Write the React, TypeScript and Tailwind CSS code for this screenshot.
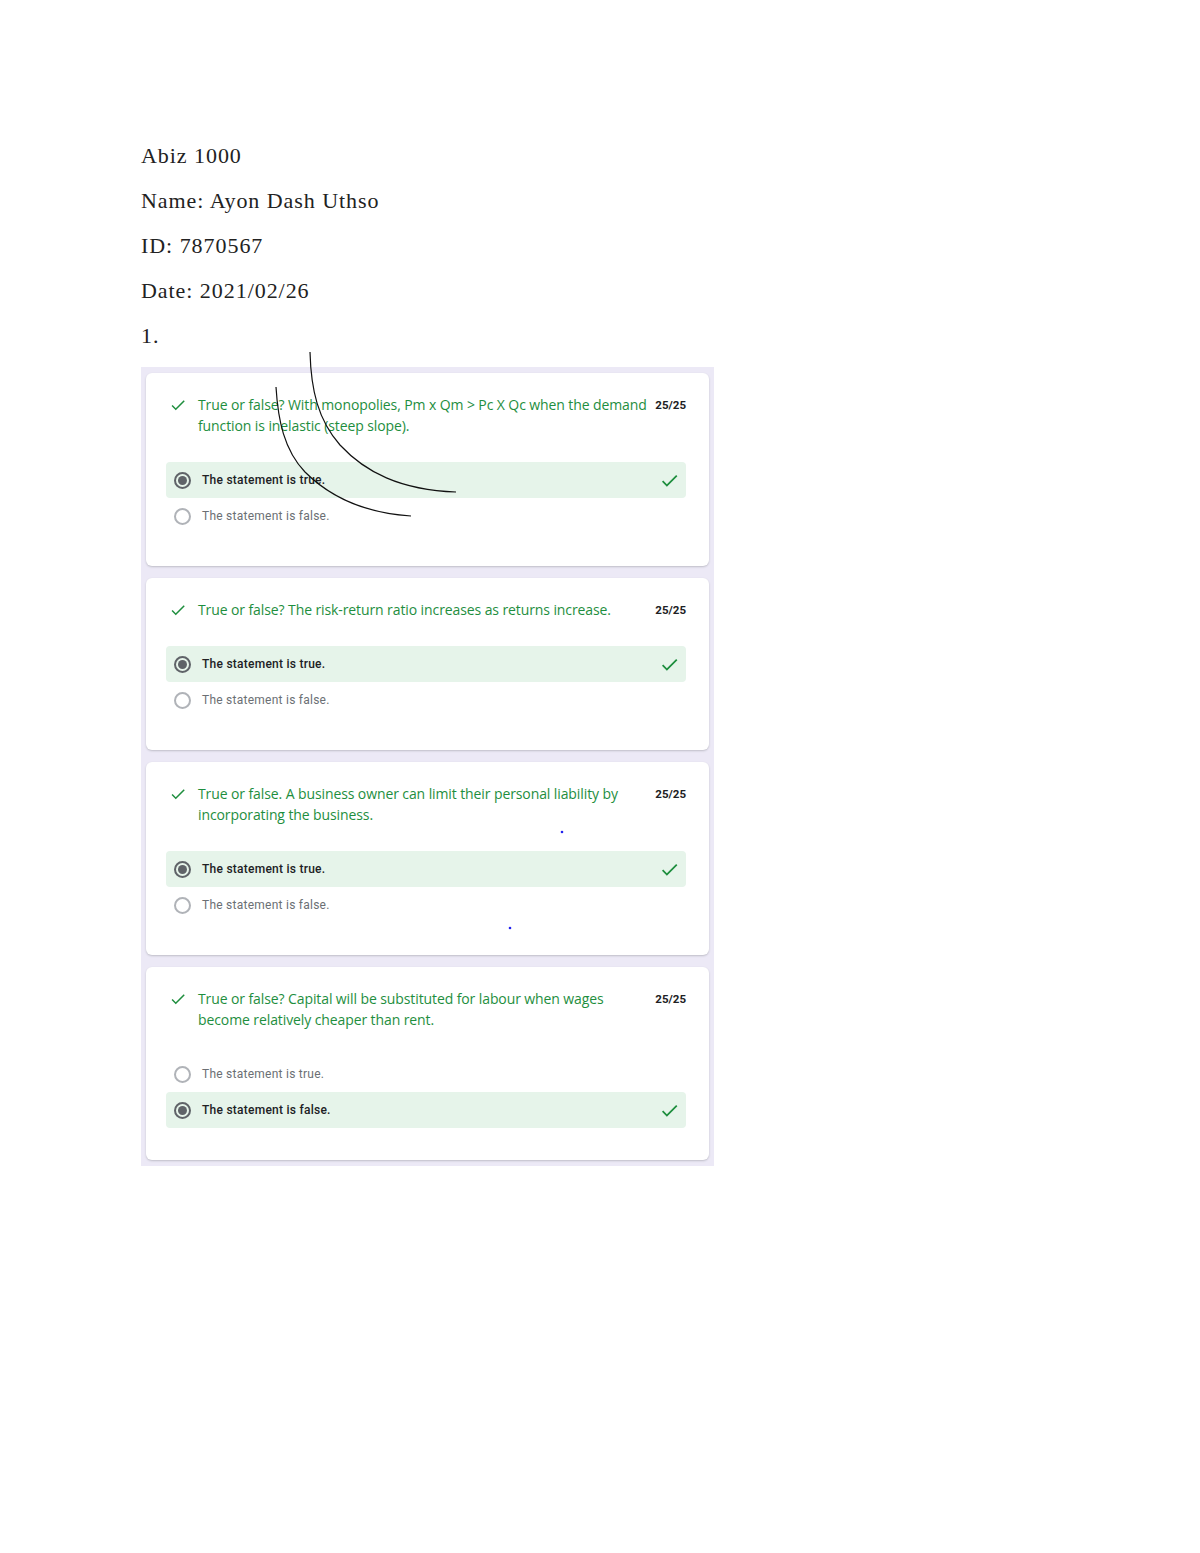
import React from "react";

const CheckIcon = ({ size = 18 }: { size?: number }) => (
  <svg width={size} height={size} viewBox="0 0 24 24" className="shrink-0">
    <path d="M9 16.17L4.83 12l-1.42 1.41L9 19 21 7l-1.41-1.41z" fill="#1e8e3e" />
  </svg>
);

const Radio = ({ selected }: { selected: boolean }) =>
  selected ? (
    <div className="w-[17px] h-[17px] rounded-full border-2 border-[#5f6368] flex items-center justify-center shrink-0">
      <div className="w-[9px] h-[9px] rounded-full bg-[#5f6368]" />
    </div>
  ) : (
    <div className="w-[17px] h-[17px] rounded-full border-2 border-[#b0b3b8] shrink-0" />
  );

type Q = { text: string; correct: "true" | "false" };

const questions: Q[] = [
  {
    text: "True or false? With monopolies, Pm x Qm > Pc X Qc when the demand function is inelastic (steep slope).",
    correct: "true",
  },
  { text: "True or false? The risk-return ratio increases as returns increase.", correct: "true" },
  {
    text: "True or false. A business owner can limit their personal liability by incorporating the business.",
    correct: "true",
  },
  {
    text: "True or false? Capital will be substituted for labour when wages become relatively cheaper than rent.",
    correct: "false",
  },
];

const Option = ({ label, selected }: { label: string; selected: boolean }) => (
  <div
    className={
      "h-[36px] flex items-center pl-[8px] pr-[8px] rounded-[4px] " + (selected ? "bg-[#e6f4ea]" : "")
    }
  >
    <Radio selected={selected} />
    <span
      className={
        "ml-[11px] text-[12px] tracking-[0.25px] " +
        (selected ? "text-[#202124] font-medium" : "text-[#6b6f74]")
      }
      style={{ fontFamily: "Roboto, 'Open Sans', sans-serif" }}
    >
      {label}
    </span>
    {selected && (
      <div className="ml-auto mr-[-2px]">
        <CheckIcon size={21} />
      </div>
    )}
  </div>
);

const Card = ({ q }: { q: Q }) => (
  <div className="bg-white rounded-[6px] shadow-[0_1px_2px_rgba(60,64,67,0.25)] pl-[20px] pr-[23px] pt-[21px] pb-[32px]">
    <div className="flex items-start">
      <div className="ml-[3px] mt-[2px]">
        <CheckIcon size={18} />
      </div>
      <div
        className="ml-[11px] w-[452px] text-[14px] leading-[21px] text-[#1e8e3e] tracking-[-0.1px]"
        style={{ fontFamily: "'Open Sans', Roboto, sans-serif" }}
      >
        {q.text}
      </div>
      <div
        className="ml-auto mt-[3px] text-[11.5px] font-bold text-[#202124]"
        style={{ fontFamily: "Roboto, sans-serif" }}
      >
        25/25
      </div>
    </div>
    <div className="mt-[26px] flex flex-col">
      <Option label="The statement is true." selected={q.correct === "true"} />
      <Option label="The statement is false." selected={q.correct === "false"} />
    </div>
  </div>
);

export default function App() {
  return (
    <div className="relative w-[1200px] h-[1553px] bg-white">
      <div
        className="pl-[141px] pt-[133px] text-[22px] leading-[45px] text-[#222] tracking-[0.95px]"
        style={{ fontFamily: "'Liberation Serif', 'Times New Roman', serif" }}
      >
        <div>Abiz 1000</div>
        <div>Name: Ayon Dash Uthso</div>
        <div>ID: 7870567</div>
        <div>Date: 2021/02/26</div>
        <div>1.</div>
      </div>
      <div className="ml-[141px] mt-[9px] w-[573px] bg-[#ece9f6] px-[5px] pt-[6px] pb-[6px] flex flex-col gap-[12px]">
        {questions.map((q, i) => (
          <Card key={i} q={q} />
        ))}
      </div>
      <svg
        className="absolute left-0 top-0 pointer-events-none"
        width={1200}
        height={1553}
        viewBox="0 0 1200 1553"
      >
        <path
          d="M310 352 C 311 390, 318 420, 340 445 C 365 472, 400 490, 456 492"
          fill="none"
          stroke="#111"
          strokeWidth={1.2}
        />
        <path
          d="M276 387 C 278 420, 284 450, 305 472 C 330 497, 365 513, 411 516"
          fill="none"
          stroke="#111"
          strokeWidth={1.2}
        />
        <circle cx={562} cy={832} r={1.3} fill="#2222ee" />
        <circle cx={510} cy={928} r={1.3} fill="#2222ee" />
      </svg>
    </div>
  );
}
